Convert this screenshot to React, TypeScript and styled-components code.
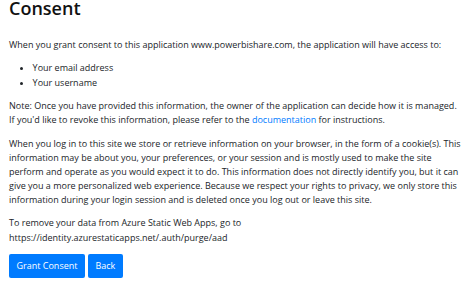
import styled, { createGlobalStyle } from 'styled-components'

const GlobalStyle = createGlobalStyle`
  html, body {
    margin: 0;
    padding: 0;
    background: #ffffff;
  }
  body {
    font-family: 'Segoe UI', 'Open Sans', 'Noto Sans', sans-serif;
    font-size: 9px;
    line-height: 14.1px;
    color: #212529;
  }
`

const Page = styled.main`
  padding: 0 0 0 9px;
`

const Title = styled.h1`
  margin: -2px 0 18.4px;
  font-size: 18px;
  line-height: 21.6px;
  font-weight: 600;
  color: #111111;
`

const Text = styled.p`
  margin: 0 0 9.4px;
`

const List = styled.ul`
  margin: 0 0 9.4px;
  padding-left: 23.6px;
`

const Link = styled.a`
  color: #007bff;
  text-decoration: none;
`

const Actions = styled.div`
  display: flex;
  gap: 3px;
  margin-top: 1px;
`

const Button = styled.button`
  font-family: inherit;
  font-size: 9px;
  line-height: 14.1px;
  padding: 5px 7.5px;
  border: 0;
  border-radius: 2px;
  background: #007bff;
  color: #ffffff;
`

export default function App() {
  return (
    <>
      <GlobalStyle />
      <Page>
        <Title>Consent</Title>
        <Text>
          When you grant consent to this application www.powerbishare.com, the application will have access to:
        </Text>
        <List>
          <li>Your email address</li>
          <li>Your username</li>
        </List>
        <Text>
          Note: Once you have provided this information, the owner of the application can decide how it is managed.
          <br />
          If you'd like to revoke this information, please refer to the <Link href="#">documentation</Link> for
          instructions.
        </Text>
        <Text>
          When you log in to this site we store or retrieve information on your browser, in the form of a cookie(s). This
          <br />
          information may be about you, your preferences, or your session and is mostly used to make the site
          <br />
          perform and operate as you would expect it to do. This information does not directly identify you, but it can
          <br />
          give you a more personalized web experience. Because we respect your rights to privacy, we only store this
          <br />
          information during your login session and is deleted once you log out or leave this site.
        </Text>
        <Text>
          To remove your data from Azure Static Web Apps, go to
          <br />
          https://identity.azurestaticapps.net/.auth/purge/aad
        </Text>
        <Actions>
          <Button>Grant Consent</Button>
          <Button>Back</Button>
        </Actions>
      </Page>
    </>
  )
}
